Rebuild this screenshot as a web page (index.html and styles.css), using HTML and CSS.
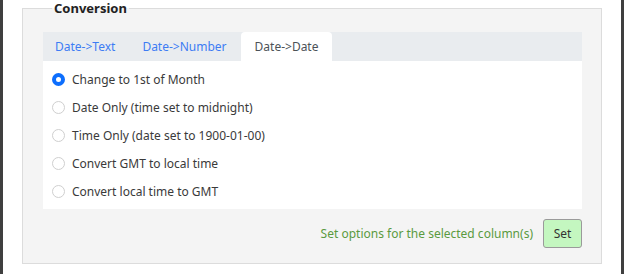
FILE: index.html
```html
<!DOCTYPE html>
<html>
<head>
<meta charset="utf-8">
<link rel="stylesheet" href="styles.css">
</head>
<body>
<div class="frame">
  <fieldset class="group">
    <legend class="legend">Conversion</legend>
    <div class="tabs">
      <div class="tab">Date-&gt;Text</div>
      <div class="tab">Date-&gt;Number</div>
      <div class="tab active">Date-&gt;Date</div>
    </div>
    <div class="panel">
      <label class="row"><span class="radio checked"></span>Change to 1st of Month</label>
      <label class="row"><span class="radio"></span>Date Only (time set to midnight)</label>
      <label class="row"><span class="radio"></span>Time Only (date set to 1900-01-00)</label>
      <label class="row"><span class="radio"></span>Convert GMT to local time</label>
      <label class="row"><span class="radio"></span>Convert local time to GMT</label>
    </div>
    <div class="footer">
      <span class="hint">Set options for the selected column(s)</span>
      <button class="set-btn">Set</button>
    </div>
  </fieldset>
</div>
</body>
</html>
```

FILE: styles.css
```css
html, body {
  margin: 0;
  padding: 0;
  background: #ffffff;
}
body {
  font-family: "Noto Sans", "Open Sans", sans-serif;
  font-size: 12px;
  color: #333;
}
.frame {
  box-sizing: border-box;
  height: 274px;
  width: 624px;
  border-left: 3px solid #3f3f3f;
  border-right: 3px solid #3f3f3f;
  padding: 0 19px;
}
.group {
  margin: 0;
  box-sizing: border-box;
  width: 580px;
  height: 264px;
  border: 1px solid #dcdcdc;
  background: #f4f4f4;
  padding: 16px 19px 0 20px;
}
.legend {
  font-weight: bold;
  font-size: 13px;
  line-height: 16px;
  color: #222;
  padding: 0 2px;
  margin-left: 9px;
}
.tabs {
  display: flex;
  background: #e9ecef;
  height: 29px;
}
.tab {
  padding: 0 12px;
  line-height: 29px;
  color: #3d7cf4;
  white-space: nowrap;
}
.tab + .tab {
  margin-left: 3px;
}
.tab.active {
  background: #ffffff;
  color: #4c5257;
  border-radius: 4px 4px 0 0;
  padding: 0 14px 0 14px;
  margin-left: 2px;
}
.panel {
  background: #ffffff;
  padding: 5px 0 4px 9px;
  display: flex;
  flex-direction: column;
}
.row {
  height: 27.8px;
  display: flex;
  align-items: center;
  color: #3a3a3a;
}
.radio {
  box-sizing: border-box;
  width: 13px;
  height: 13px;
  border-radius: 50%;
  border: 1px solid #cfcfcf;
  background: #fff;
  margin-right: 7px;
  flex: none;
}
.radio.checked {
  border: 4px solid #0d6efd;
  background: #fff;
}
.footer {
  display: flex;
  justify-content: flex-end;
  align-items: center;
  margin-top: 10px;
  gap: 10px;
}
.hint {
  color: #5a9a3f;
}
.set-btn {
  box-sizing: border-box;
  width: 39px;
  height: 29px;
  background: #c4f7c0;
  border: 1px solid #9a9a9a;
  border-radius: 3px;
  font-family: inherit;
  font-size: 12px;
  color: #333;
  padding: 0;
}
```
